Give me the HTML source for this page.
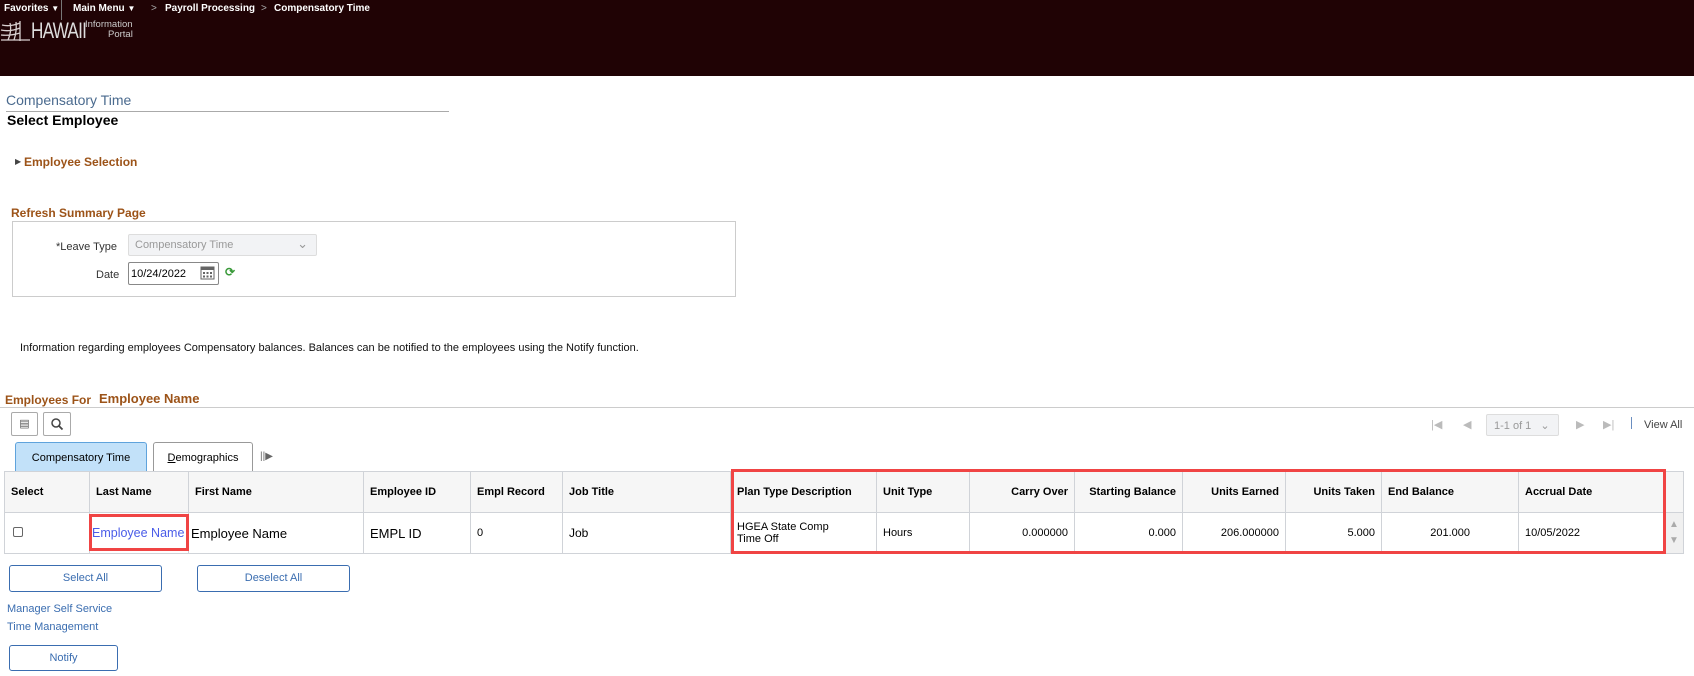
<!DOCTYPE html>
<html><head><meta charset="utf-8"><style>
*{margin:0;padding:0;box-sizing:border-box}
body{width:1694px;height:676px;position:relative;background:#fff;font-family:"Liberation Sans",Arial,sans-serif;overflow:hidden;color:#000}
.a{position:absolute;white-space:nowrap}
.hdr{position:absolute;left:0;top:0;width:1694px;height:76px;background:#200305}
.nav{color:#fff;font-size:10px;font-weight:bold;top:3px}
.brown{color:#9c5318;font-weight:bold}
.btn{position:absolute;border:1px solid #3a6db0;border-radius:3px;color:#3a6db0;font-size:11px;text-align:center;background:#fff}
table{position:absolute;left:4px;top:471px;border-collapse:collapse;font-size:11px;table-layout:fixed}
td,th{border:1px solid #d0d3d8;padding:0 6px;text-align:left;white-space:nowrap;overflow:visible}
th{height:41px;background:#f6f6f6;font-weight:bold;font-size:11px}
td{height:41px}
.r{text-align:right}
</style></head><body>
<div class="hdr"></div>
<div class="a nav" style="left:4px">Favorites <span style="font-size:8px">&#9660;</span></div>
<div class="a" style="left:61px;top:0;width:1px;height:20px;background:#777"></div>
<div class="a nav" style="left:73px">Main Menu <span style="font-size:8px">&#9660;</span></div>
<div class="a nav" style="left:151px;color:#aaa;font-weight:normal">&gt;</div>
<div class="a nav" style="left:165px">Payroll Processing</div>
<div class="a nav" style="left:261px;color:#aaa;font-weight:normal">&gt;</div>
<div class="a nav" style="left:274px">Compensatory Time</div>
<svg class="a" style="left:0;top:19px" width="32" height="24" viewBox="0 0 32 24"><g fill="none" stroke="#d8d0d0" stroke-width="1.3"><path d="M20 2 L20 22 M20 4 Q10 8 2 6 M20 9 Q10 13 1 11 M20 14 Q10 17 1 16 M1 21 L30 21 M8 21 Q12 12 10 4 M14 21 Q17 12 16 3"/></g></svg>
<div class="a" style="left:31px;top:18px;color:#ddd;font-size:22px;letter-spacing:-1px;transform:scaleX(.78);transform-origin:left">HAWAII</div>
<div class="a" style="left:85px;top:19px;color:#ccc;font-size:9.5px">Information</div>
<div class="a" style="left:108px;top:29px;color:#ccc;font-size:9.5px">Portal</div>

<div class="a" style="left:6px;top:92px;font-size:14px;color:#4a6a8e">Compensatory Time</div>
<div class="a" style="left:6px;top:111px;width:443px;height:1px;background:#aaa"></div>
<div class="a" style="left:7px;top:112px;font-size:14px;font-weight:bold">Select Employee</div>

<div class="a" style="left:15px;top:157px;font-size:8px;color:#444">&#9654;</div>
<div class="a brown" style="left:24px;top:155px;font-size:12px">Employee Selection</div>
<div class="a brown" style="left:11px;top:206px;font-size:12px">Refresh Summary Page</div>
<div class="a" style="left:12px;top:221px;width:724px;height:76px;border:1px solid #ccc"></div>
<div class="a" style="left:56px;top:241px;font-size:11px;color:#333">*Leave Type</div>
<div class="a" style="left:128px;top:234px;width:189px;height:22px;background:#f2f3f5;border:1px solid #ddd;border-radius:2px;color:#999;font-size:11px;padding:4px 6px">Compensatory Time<span style="position:absolute;right:8px;top:1px;font-size:13px;color:#999">&#8964;</span></div>
<div class="a" style="left:96px;top:269px;font-size:11px;color:#333">Date</div>
<div class="a" style="left:128px;top:262px;width:91px;height:23px;border:1px solid #888;border-radius:2px;font-size:11px;padding:5px 2px">10/24/2022</div>
<svg class="a" style="left:200px;top:265px" width="15" height="15" viewBox="0 0 15 15"><rect x="1" y="2" width="13" height="12" fill="#fff" stroke="#666"/><rect x="1" y="2" width="13" height="3" fill="#666"/><g fill="#666"><rect x="3" y="7" width="2" height="2"/><rect x="6.5" y="7" width="2" height="2"/><rect x="10" y="7" width="2" height="2"/><rect x="3" y="10.5" width="2" height="2"/><rect x="6.5" y="10.5" width="2" height="2"/><rect x="10" y="10.5" width="2" height="2"/></g></svg>
<div class="a" style="left:225px;top:265px;font-size:12px;color:#3a9a3a;font-weight:bold">&#10227;</div>

<div class="a" style="left:20px;top:342px;font-size:11px;color:#111">Information regarding employees Compensatory balances. Balances can be notified to the employees using the Notify function.</div>

<div class="a brown" style="left:5px;top:393px;font-size:12px">Employees For</div>
<div class="a brown" style="left:99px;top:391px;font-size:13px">Employee Name</div>
<div class="a" style="left:0;top:407px;width:1694px;height:1px;background:#ccc"></div>
<div class="a" style="left:11px;top:412px;width:27px;height:24px;border:1px solid #aaa;border-radius:2px;font-size:11px;text-align:center;line-height:22px;color:#555">&#9636;</div>
<div class="a" style="left:43px;top:412px;width:28px;height:24px;border:1px solid #aaa;border-radius:2px;text-align:center;color:#444"><svg width="14" height="14" style="margin-top:4px" viewBox="0 0 14 14"><circle cx="6" cy="6" r="4" fill="none" stroke="#444" stroke-width="1.5"/><path d="M9 9 L12.5 12.5" stroke="#444" stroke-width="1.8"/></svg></div>

<div class="a" style="left:1431px;top:418px;font-size:11px;color:#bbb">|&#9664;</div>
<div class="a" style="left:1463px;top:418px;font-size:11px;color:#bbb">&#9664;</div>
<div class="a" style="left:1486px;top:414px;width:73px;height:22px;background:#f2f3f5;border:1px solid #ddd;border-radius:2px;font-size:11px;color:#999;padding:4px 7px">1-1 of 1 <span style="margin-left:6px">&#8964;</span></div>
<div class="a" style="left:1576px;top:418px;font-size:11px;color:#bbb">&#9654;</div>
<div class="a" style="left:1603px;top:418px;font-size:11px;color:#bbb">&#9654;|</div>
<div class="a" style="left:1631px;top:417px;width:1px;height:12px;background:#6a8ec0"></div>
<div class="a" style="left:1644px;top:419px;font-size:11px;color:#444">View All</div>

<div class="a" style="left:15px;top:442px;width:132px;height:29px;background:#c2e1f9;border:1px solid #5fa3dc;border-bottom:none;border-radius:3px 3px 0 0;font-size:11px;text-align:center;line-height:30px">Compensatory Time</div>
<div class="a" style="left:153px;top:442px;width:100px;height:29px;border:1px solid #999;border-bottom:none;border-radius:3px 3px 0 0;font-size:11px;text-align:center;line-height:30px"><u>D</u>emographics</div>
<div class="a" style="left:260px;top:451px;font-size:10px;color:#666">||&#9654;</div>

<table>
<colgroup><col style="width:85px"><col style="width:99px"><col style="width:175px"><col style="width:107px"><col style="width:92px"><col style="width:168px"><col style="width:146px"><col style="width:93px"><col style="width:105px"><col style="width:108px"><col style="width:103px"><col style="width:96px"><col style="width:137px"><col style="width:146px"><col style="width:19px"></colgroup>
<tr><th>Select</th><th>Last Name</th><th>First Name</th><th>Employee ID</th><th>Empl Record</th><th>Job Title</th><th>Plan Type Description</th><th>Unit Type</th><th class="r">Carry Over</th><th class="r">Starting Balance</th><th class="r">Units Earned</th><th class="r">Units Taken</th><th>End Balance</th><th>Accrual Date</th><th style="padding:0"></th></tr>
<tr><td><span style="display:inline-block;width:10px;height:10px;border:1px solid #666;border-radius:2px;margin-left:2px"></span></td><td style="font-size:12.5px;color:#4a5ce8;padding:0 0 0 2px">Employee Name</td><td style="font-size:13px;padding-left:2px">Employee Name</td><td style="font-size:13px">EMPL ID</td><td>0</td><td style="font-size:12px">Job</td><td>HGEA State Comp<br>Time Off</td><td>Hours</td><td class="r">0.000000</td><td class="r">0.000</td><td class="r">206.000000</td><td class="r">5.000</td><td class="r" style="padding-right:48px">201.000</td><td>10/05/2022</td><td style="background:#f0f0f0;padding:0;text-align:center;color:#aaa;font-size:10px;line-height:16px">&#9650;<br>&#9660;</td></tr>
</table>
<div class="a" style="left:731px;top:469px;width:935px;height:85px;border:3px solid #f04444"></div>
<div class="a" style="left:89px;top:514px;width:100px;height:37px;border:3px solid #f04444"></div>

<div class="btn" style="left:9px;top:565px;width:153px;height:27px;line-height:25px">Select All</div>
<div class="btn" style="left:197px;top:565px;width:153px;height:27px;line-height:25px">Deselect All</div>
<div class="a" style="left:7px;top:603px;font-size:11px;color:#3a6db0">Manager Self Service</div>
<div class="a" style="left:7px;top:621px;font-size:11px;color:#3a6db0">Time Management</div>
<div class="btn" style="left:9px;top:645px;width:109px;height:26px;line-height:24px">Notify</div>
</body></html>
